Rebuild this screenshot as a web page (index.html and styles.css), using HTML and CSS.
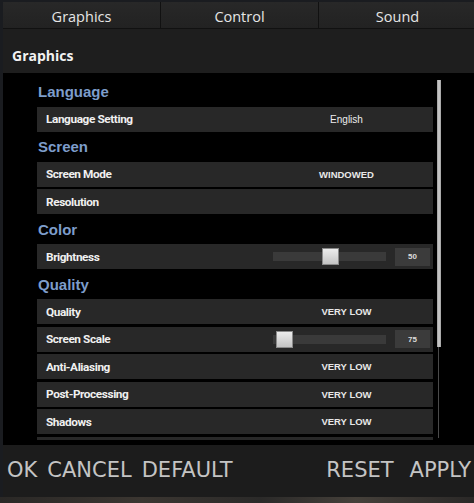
FILE: index.html
```html
<!DOCTYPE html>
<html>
<head>
<meta charset="utf-8">
<link rel="stylesheet" href="styles.css">
</head>
<body>
<div class="window">
  <div class="tabs">
    <div class="tab">Graphics</div>
    <div class="tab">Control</div>
    <div class="tab">Sound</div>
  </div>
  <div class="panel-head">Graphics</div>
  <div class="content">
    <div class="viewport">
      <div class="list">
        <div class="section">Language</div>
        <div class="row"><div class="label">Language Setting</div><div class="value value-light">English</div></div>
        <div class="section">Screen</div>
        <div class="row"><div class="label">Screen Mode</div><div class="value">WINDOWED</div></div>
        <div class="row"><div class="label">Resolution</div><div class="value"></div></div>
        <div class="section">Color</div>
        <div class="row">
          <div class="label">Brightness</div>
          <div class="slider-cell">
            <div class="track"><div class="thumb" style="left: 49px"></div></div>
            <div class="numbox">50</div>
          </div>
        </div>
        <div class="section">Quality</div>
        <div class="row"><div class="label">Quality</div><div class="value">VERY LOW</div></div>
        <div class="row">
          <div class="label">Screen Scale</div>
          <div class="slider-cell">
            <div class="track"><div class="thumb" style="left: 3px"></div></div>
            <div class="numbox">75</div>
          </div>
        </div>
        <div class="row"><div class="label">Anti-Aliasing</div><div class="value">VERY LOW</div></div>
        <div class="row"><div class="label">Post-Processing</div><div class="value">VERY LOW</div></div>
        <div class="row"><div class="label">Shadows</div><div class="value">VERY LOW</div></div>
        <div class="row"></div>
      </div>
    </div>
    <div class="scrollbar">
      <div class="scroll-thumb"></div>
      <div class="scroll-track"></div>
    </div>
  </div>
  <div class="footer">
    <div class="btn-group">
      <span class="btn">OK</span>
      <span class="btn">CANCEL</span>
      <span class="btn">DEFAULT</span>
    </div>
    <div class="btn-group btn-group-right">
      <span class="btn">RESET</span>
      <span class="btn">APPLY</span>
    </div>
  </div>
</div>
<div class="backdrop"></div>
</body>
</html>
```

FILE: styles.css
```css
html, body {
  margin: 0;
  padding: 0;
}
body {
  width: 474px;
  height: 503px;
  overflow: hidden;
  background: #1a1c20;
}
.window {
  margin-left: 3px;
  padding-top: 2px;
}
.tabs {
  display: grid;
  grid-template-columns: 157px 157px 157px;
  column-gap: 1px;
  height: 26px;
  background: #111;
  border-bottom: 1px solid #111;
}
.tab {
  background: linear-gradient(#282828, #222);
  color: #e6e6e6;
  font-family: "Open Sans", sans-serif;
  font-size: 14.5px;
  display: flex;
  align-items: center;
  justify-content: center;
  padding-top: 2px;
}
.panel-head {
  height: 44px;
  background: #1e1e1e;
  box-sizing: border-box;
  padding-left: 9px;
  padding-top: 8px;
  display: flex;
  align-items: center;
  color: #f2f2f2;
  font-family: "Open Sans", sans-serif;
  font-weight: 700;
  font-size: 14px;
}
.content {
  height: 372px;
  background: #000;
  box-sizing: border-box;
  padding: 6px 0 5px 34px;
  display: flex;
}
.viewport {
  width: 396px;
  height: 361px;
  overflow: hidden;
}
.list {
  display: flex;
  flex-direction: column;
  gap: 2.5px;
}
.section {
  height: 25px;
  display: flex;
  align-items: center;
  padding-left: 1px;
  color: #7d9dcb;
  font-family: "Liberation Sans", Arial, sans-serif;
  font-weight: 700;
  font-size: 15px;
}
.row {
  height: 25px;
  flex: none;
  background: #282828;
  display: grid;
  grid-template-columns: 223px 173px;
  align-items: center;
}
.label {
  padding-left: 9px;
  color: #f0f0f0;
  font-family: Roboto, sans-serif;
  font-weight: 700;
  font-size: 11.8px;
  letter-spacing: -0.4px;
}
.value {
  text-align: center;
  color: #e8e8e8;
  font-family: "Liberation Sans", Arial, sans-serif;
  font-weight: 700;
  font-size: 9.5px;
}
.value-light {
  font-weight: 400;
  font-size: 10px;
  color: #ededed;
}
.slider-cell {
  display: flex;
  align-items: center;
  padding-left: 13px;
  gap: 9px;
}
.track {
  position: relative;
  width: 113px;
  height: 9px;
  background: #3a3a3a;
}
.thumb {
  position: absolute;
  top: -4px;
  width: 15px;
  height: 15px;
  border: 1px solid #8a8a8a;
  background: linear-gradient(#ececec, #c4c4c4);
}
.numbox {
  width: 35px;
  height: 18px;
  background: #3b3b3b;
  color: #dcdcdc;
  font-family: "Liberation Sans", Arial, sans-serif;
  font-weight: 700;
  font-size: 8px;
  display: flex;
  align-items: center;
  justify-content: center;
}
.scrollbar {
  margin-left: 3px;
  margin-top: 1px;
  width: 5px;
  display: flex;
  flex-direction: column;
  align-items: center;
}
.scroll-thumb {
  width: 4px;
  height: 267px;
  background: linear-gradient(90deg, #9c9c9c, #d0d0d0, #a0a0a0);
}
.scroll-track {
  width: 1px;
  height: 91px;
  background: #4a4a4a;
}
.footer {
  height: 50px;
  background: #1c1c1c;
  display: flex;
  justify-content: space-between;
  align-items: center;
  padding: 0 3px 2px 4px;
  color: #c4c4c4;
  font-family: "DejaVu Sans", sans-serif;
  font-size: 21px;
}
.btn-group {
  display: flex;
  gap: 10px;
}
.btn-group-right {
  gap: 16px;
}
.backdrop {
  height: 8px;
  background: linear-gradient(90deg, #2a2826, #3b3631 30%, #2b2a29 55%, #45403a 75%, #2a2827);
}
```
